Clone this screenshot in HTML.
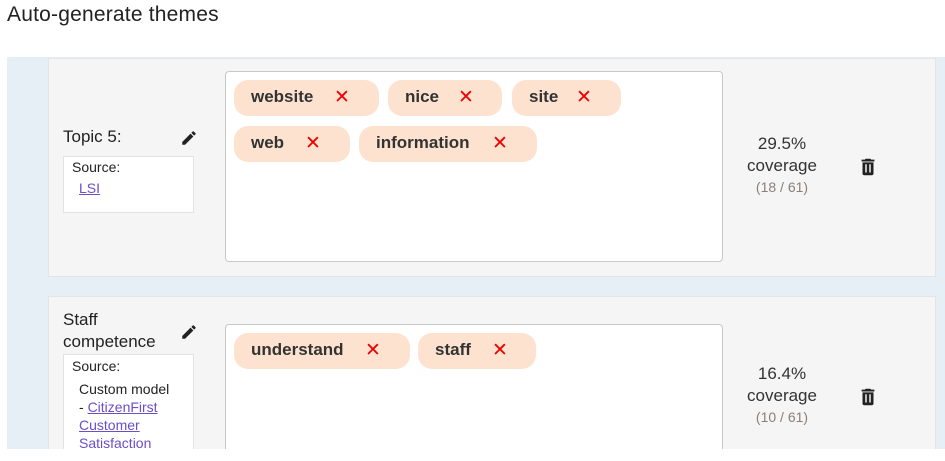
<!DOCTYPE html><html><head><style>
*{margin:0;padding:0;box-sizing:border-box}
html,body{width:945px;height:461px;overflow:hidden}
body{background:#fff;font-family:"Liberation Sans",sans-serif;color:#222;position:relative}
.a{position:absolute}
h1{position:absolute;left:7px;top:3px;font-size:21px;font-weight:normal;color:#222;letter-spacing:0.2px}
.blue{left:7px;top:57px;width:938px;height:392px;background:#e6eef6}
.card{left:48px;width:888px;background:#f5f5f5;border:1px solid #e4e4e4}
.box{left:225px;width:498px;background:#fff;border:1px solid #c8c8c8;border-radius:4px}
.chip{position:absolute;height:36px;background:#fde3cf;border-radius:14px;font-size:17px;font-weight:bold;color:#333;line-height:34px;padding-left:17px}
.chip span{position:absolute;top:1px;color:#e00;font-weight:normal;font-size:19px}
.src{left:63px;width:131px;background:#fff;border:1px solid #e2e2e2;font-size:14px;padding:2px 8px}
.src a{color:#6a4fc7;text-decoration:underline}
.lbl{font-size:17px;color:#222}
.cov{width:120px;text-align:center;font-size:17px;color:#333;line-height:22px}
.cov small{display:block;font-size:14px;color:#8a7f7a;line-height:20px}
.wh{left:0;top:449px;width:945px;height:12px;background:#fff;z-index:10}
</style></head><body>
<h1>Auto-generate themes</h1>
<div class="a blue"></div>
<div class="a card" style="top:58px;height:219px"></div>
<div class="a card" style="top:296px;height:153px;border-bottom:none"></div>

<div class="a lbl" style="left:63px;top:127px">Topic 5:</div>
<svg class="a" style="left:180px;top:129px" width="18" height="18" viewBox="0 0 24 24"><path fill="#222" d="M3 17.25V21h3.75L17.8 9.94l-3.75-3.75L3 17.25zM20.7 7.04a1 1 0 000-1.41l-2.34-2.34a1 1 0 00-1.41 0l-1.83 1.83 3.75 3.75 1.83-1.83z"/></svg>
<div class="a src" style="top:156px;height:57px">Source:<br><a style="margin-left:7px;line-height:26px">LSI</a></div>
<div class="a box" style="top:71px;height:191px"></div>
<div class="chip" style="left:234px;top:80px;width:145px">website<span style="left:100px">✕</span></div>
<div class="chip" style="left:388px;top:80px;width:114px">nice<span style="left:70px">✕</span></div>
<div class="chip" style="left:512px;top:80px;width:109px">site<span style="left:64px">✕</span></div>
<div class="chip" style="left:234px;top:126px;width:116px">web<span style="left:71px">✕</span></div>
<div class="chip" style="left:359px;top:126px;width:178px">information<span style="left:133px">✕</span></div>
<div class="a cov" style="left:722px;top:133px">29.5%<br>coverage<small>(18 / 61)</small></div>
<svg class="a" style="left:857px;top:155px" width="22" height="24" viewBox="0 0 24 24"><path fill="#222" d="M6 19a2 2 0 002 2h8a2 2 0 002-2V7H6v12zM19 4h-3.5l-1-1h-5l-1 1H5v2h14V4z"/><path fill="#f5f5f5" d="M9 9h1.6v9H9zM13.4 9H15v9h-1.6z"/></svg>

<div class="a lbl" style="left:63px;top:309px;line-height:22px">Staff<br>competence</div>
<svg class="a" style="left:180px;top:323px" width="18" height="18" viewBox="0 0 24 24"><path fill="#222" d="M3 17.25V21h3.75L17.8 9.94l-3.75-3.75L3 17.25zM20.7 7.04a1 1 0 000-1.41l-2.34-2.34a1 1 0 00-1.41 0l-1.83 1.83 3.75 3.75 1.83-1.83z"/></svg>
<div class="a src" style="top:354px;height:95px;line-height:18px;border-bottom:none">Source:<div style="margin:5px 0 0 7px">Custom model<br>- <a>CitizenFirst</a><br><a>Customer</a><br><a style="text-decoration:none">Satisfaction</a></div></div>
<div class="a box" style="top:324px;height:125px;border-bottom:none;border-radius:4px 4px 0 0"></div>
<div class="chip" style="left:234px;top:333px;width:176px">understand<span style="left:131px">✕</span></div>
<div class="chip" style="left:418px;top:333px;width:118px">staff<span style="left:74px">✕</span></div>
<div class="a cov" style="left:722px;top:363px">16.4%<br>coverage<small>(10 / 61)</small></div>
<svg class="a" style="left:857px;top:385px" width="22" height="24" viewBox="0 0 24 24"><path fill="#222" d="M6 19a2 2 0 002 2h8a2 2 0 002-2V7H6v12zM19 4h-3.5l-1-1h-5l-1 1H5v2h14V4z"/><path fill="#f5f5f5" d="M9 9h1.6v9H9zM13.4 9H15v9h-1.6z"/></svg>
<div class="a wh"></div>
</body></html>
